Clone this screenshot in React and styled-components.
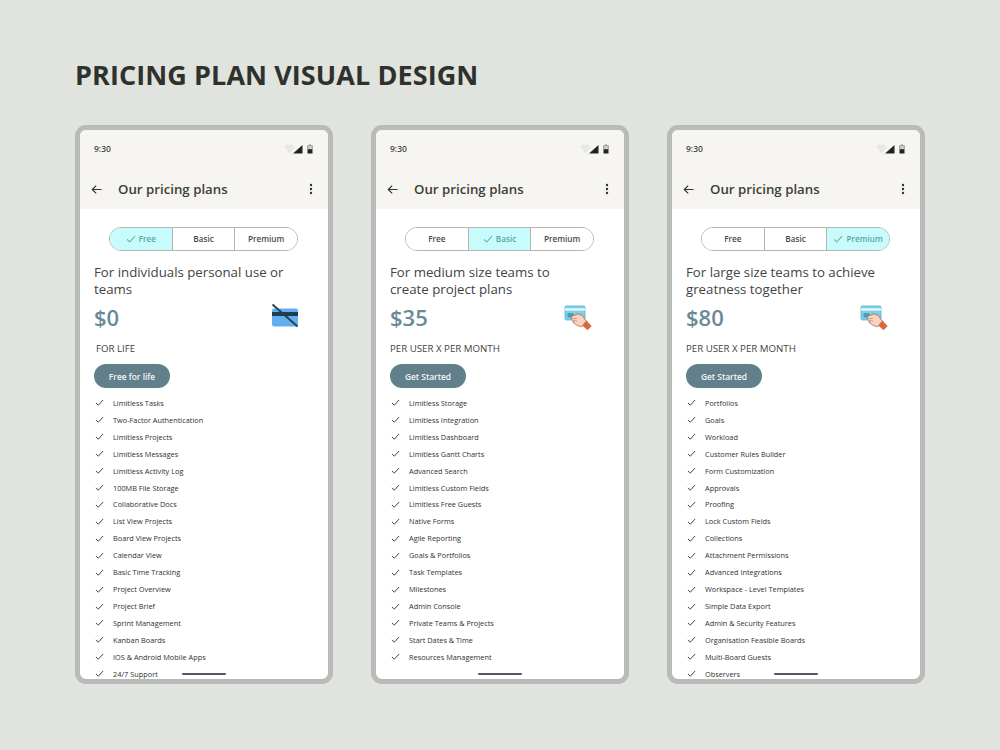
import React from "react";
import styled, { createGlobalStyle } from "styled-components";

const Global = createGlobalStyle`
  html, body { margin: 0; padding: 0; background: #e1e3de; }
  body { font-family: "Open Sans", "Liberation Sans", sans-serif; }
`;
const Page = styled.div`
  width: 1000px; height: 750px; box-sizing: border-box; padding: 56px 75px 0; overflow: hidden;
  background: #e1e3de;
`;
const Heading = styled.h1`
  margin: 0 0 31px 0; font-size: 27px; line-height: 38px; font-weight: 700; color: #2e312c; letter-spacing: 0.08px;
`;
const Phones = styled.div`display: flex; gap: 38px;`;
const Phone = styled.section`
  position: relative; width: 258px; height: 559px; box-sizing: border-box;
  border: 5px solid #b8bbb8; border-radius: 11px; background: #fff; overflow: hidden;
`;
const Top = styled.header`
  height: 79px; background: #f6f5f1; box-sizing: border-box; padding: 12px 14px 0 11px; color: #2b2b2b;
`;
const Status = styled.div`
  display: flex; justify-content: space-between; align-items: center; height: 13px; padding: 0 1px 1px 3px;
  box-sizing: content-box;
  font-size: 8.5px; font-weight: 600; color: #4a4a4a;
`;
const AppBar = styled.div`
  display: flex; align-items: center; margin-top: 21px; height: 24px; padding-right: 1px;
`;
const Title = styled.h2`
  flex: 1; margin: 0 0 0 16px; font-size: 13.25px; font-weight: 600; color: #3c3e38; line-height: 24px;
`;
const Body = styled.div`padding: 18px 14px 0;`;
const Segments = styled.div`
  display: flex; width: 189px; height: 24px; box-sizing: border-box; margin-left: 15px;
  border: 1px solid #b4b6b3; border-radius: 12px; overflow: hidden;
`;
const Segment = styled.div`
  flex: 1; display: flex; align-items: center; justify-content: center; gap: 3px; padding-bottom: 1px;
  font-size: 8.2px; font-weight: 600;
  color: ${p => (p.$active ? "#5aa89f" : "#4a4c49")};
  background: ${p => (p.$active ? "#c8fbfb" : "#fff")};
  & + & { border-left: 1px solid #b4b6b3; }
`;
const Desc = styled.p`
  margin: 13px 0 0; font-size: 13.25px; line-height: 17px; color: #41443f; height: 34px; width: 195px;
`;
const PriceRow = styled.div`
  display: flex; justify-content: space-between; align-items: center; height: 30px; margin-top: 4px;
`;
const Price = styled.div`font-size: 22px; font-weight: 600; color: #6b8a98; line-height: 30px;`;
const Period = styled.div`
  margin: 10px 0 0 ${p => (p.$free ? 2 : 0)}px; font-size: 9.7px; line-height: 14px; color: #3f423e;
`;
const Cta = styled.div`
  display: flex; align-items: center; justify-content: center; width: 76px; height: 24px; margin-top: 8px;
  border-radius: 12px; background: #627f8c; color: #f4f6f6; font-size: 8.4px; font-weight: 600;
`;
const List = styled.ul`margin: 6.5px 0 0; padding: 0; list-style: none;`;
const Item = styled.li`
  display: flex; align-items: center; height: 16.93px; font-size: 7.35px; color: #2f312e; white-space: nowrap;
`;
const CheckSlot = styled.span`display: inline-flex; width: 18px; margin-left: 1px; flex: none;`;
const HomeBar = styled.div`
  position: absolute; left: 102px; bottom: 4px; width: 44px; height: 2px; border-radius: 1px; background: #55585a;
`;
const CardSlot = styled.div`display: flex; margin-right: ${p => p.$mr}px; margin-top: ${p => p.$mt}px;`;

const Check = ({ size = 9, color = "#2f312e" }) => (
  <svg width={size} height={size} viewBox="0 0 10 10" fill="none">
    <path d="M1 5.4 3.7 8 9 2.2" stroke={color} strokeWidth="1" />
  </svg>
);
const Back = () => (
  <svg width="11" height="11" viewBox="0 0 11 11" fill="none">
    <path d="M10.5 5.5H1.5M5.2 1.6 1.3 5.5l3.9 3.9" stroke="#33352f" strokeWidth="1.2" />
  </svg>
);
const More = () => (
  <svg width="4" height="12" viewBox="0 0 4 12" fill="#33352f">
    <circle cx="2" cy="2" r="1.2" /><circle cx="2" cy="6" r="1.2" /><circle cx="2" cy="10" r="1.2" />
  </svg>
);
const Indicators = () => (
  <svg width="29" height="10" viewBox="0 0 29 10">
    <path d="M0 2.5C3-.2 8-.2 11 2.5L5.5 9.5Z" fill="#e6e6e3" />
    <path d="M9 9.5 18.5 1v8.5Z" fill="#222" />
    <rect x="23.5" y="1.6" width="5" height="8" rx=".6" fill="#222" />
    <rect x="23.5" y="1.6" width="5" height="3.6" fill="#c9c9c6" />
    <rect x="25" y=".4" width="2" height="1.4" fill="#9b9b98" />
  </svg>
);
const NoCard = () => (
  <svg width="28" height="26" viewBox="0 0 28 26">
    <rect x="1" y="5.5" width="26" height="18" rx="2" fill="#62aeee" />
    <rect x="1" y="9" width="26" height="4" fill="#1f3d52" />
    <path d="M1.5 1.5 26.5 23.5" stroke="#2b3f4c" strokeWidth="1.9" />
  </svg>
);
const HandCard = () => (
  <svg width="29" height="28" viewBox="0 0 29 28">
    <rect x="1" y="2" width="20" height="14" rx="1.4" fill="#7ed3ea" stroke="#4aa7c4" strokeWidth=".7" />
    <rect x="1" y="4.4" width="20" height="2.2" fill="#eafaff" />
    <rect x="3.5" y="9" width="6" height="4.6" fill="#4d9fb8" />
    <path d="M7 12.5 14 9.8l4 1.4 4.8 6.4-5.2 5.2-4-1.2-4-2.6-1-2.6-1.2-1.5Z" fill="#f9d3bf" stroke="#9c5a45" strokeWidth=".7" />
    <path d="M9 17h4M8.5 14.5h4" stroke="#9c5a45" strokeWidth=".5" />
    <path d="M22.3 16.6 27.6 22l-4 4.2-5.4-4.6Z" fill="#d9683c" />
  </svg>
);

const plans = [
  {
    active: 0, desc: "For individuals personal use or teams", price: "$0", period: "FOR LIFE", cta: "Free for life", free: true,
    items: ["Limitless Tasks", "Two-Factor Authentication", "Limitless Projects", "Limitless Messages", "Limitless Activity Log", "100MB File Storage", "Collaborative Docs", "List View Projects", "Board View Projects", "Calendar View", "Basic Time Tracking", "Project Overview", "Project Brief", "Sprint Management", "Kanban Boards", "IOS & Android Mobile Apps", "24/7 Support"],
  },
  {
    active: 1, desc: "For medium size teams to create project plans", price: "$35", period: "PER USER X PER MONTH", cta: "Get Started",
    items: ["Limitless Storage", "Limitless Integration", "Limitless Dashboard", "Limitless Gantt Charts", "Advanced Search", "Limitless Custom Fields", "Limitless Free Guests", "Native Forms", "Agile Reporting", "Goals & Portfolios", "Task Templates", "Milestones", "Admin Console", "Private Teams & Projects", "Start Dates & Time", "Resources Management"],
  },
  {
    active: 2, desc: "For large size teams to achieve greatness together", price: "$80", period: "PER USER X PER MONTH", cta: "Get Started",
    items: ["Portfolios", "Goals", "Workload", "Customer Rules Builder", "Form Customization", "Approvals", "Proofing", "Lock Custom Fields", "Collections", "Attachment Permissions", "Advanced Integrations", "Workspace - Level Templates", "Simple Data Export", "Admin & Security Features", "Organisation Feasible Boards", "Multi-Board Guests", "Observers"],
  },
];
const tabs = ["Free", "Basic", "Premium"];

export default function App() {
  return (
    <Page>
      <Global />
      <Heading>PRICING PLAN VISUAL DESIGN</Heading>
      <Phones>
        {plans.map(plan => (
          <Phone key={plan.price}>
            <Top>
              <Status><span>9:30</span><Indicators /></Status>
              <AppBar>
                <Back />
                <Title>Our pricing plans</Title>
                <More />
              </AppBar>
            </Top>
            <Body>
              <Segments>
                {tabs.map((t, i) => (
                  <Segment key={t} $active={i === plan.active}>
                    {i === plan.active && <Check size={10} color="#3f8f86" />}
                    {t}
                  </Segment>
                ))}
              </Segments>
              <Desc>{plan.desc}</Desc>
              <PriceRow>
                <Price>{plan.price}</Price>
                <CardSlot $mr={plan.free ? 15 : 17} $mt={plan.free ? -2 : 2}>
                  {plan.free ? <NoCard /> : <HandCard />}
                </CardSlot>
              </PriceRow>
              <Period $free={plan.free}>{plan.period}</Period>
              <Cta>{plan.cta}</Cta>
              <List>
                {plan.items.map(it => (
                  <Item key={it}><CheckSlot><Check /></CheckSlot>{it}</Item>
                ))}
              </List>
            </Body>
            <HomeBar />
          </Phone>
        ))}
      </Phones>
    </Page>
  );
}
